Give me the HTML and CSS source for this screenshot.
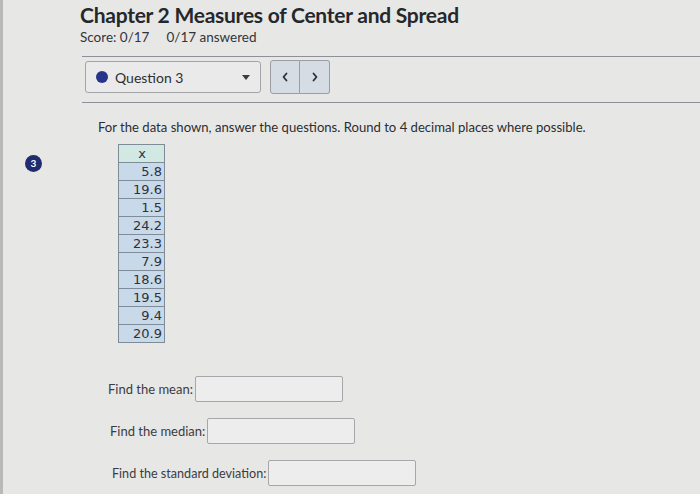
FILE: index.html
```html
<!DOCTYPE html>
<html>
<head>
<meta charset="utf-8">
<link rel="stylesheet" href="styles.css">
</head>
<body>
<div class="page">
  <header class="head">
    <h1 class="title">Chapter 2 Measures of Center and Spread</h1>
    <div class="score"><span>Score: 0/17</span><span class="answered">0/17 answered</span></div>
  </header>
  <div class="navbar">
    <div class="qselect">
      <span class="dot"></span>
      <span class="qlabel">Question 3</span>
      <span class="caret"></span>
    </div>
    <div class="arrows">
      <button class="arrow"><svg width="8" height="10" viewBox="0 0 8 10"><path d="M5.5 1.5 L2.5 5 L5.5 8.5" fill="none" stroke="#2e2f35" stroke-width="1.8" stroke-linecap="round" stroke-linejoin="round"/></svg></button>
      <button class="arrow"><svg width="8" height="10" viewBox="0 0 8 10"><path d="M2.5 1.5 L5.5 5 L2.5 8.5" fill="none" stroke="#2e2f35" stroke-width="1.8" stroke-linecap="round" stroke-linejoin="round"/></svg></button>
    </div>
  </div>
  <div class="question">
    <div class="badge">3</div>
    <div class="qbody">
      <p class="prompt">For the data shown, answer the questions. Round to 4 decimal places where possible.</p>
      <table class="data">
        <thead><tr><th>x</th></tr></thead>
        <tbody>
          <tr><td>5.8</td></tr>
          <tr><td>19.6</td></tr>
          <tr><td>1.5</td></tr>
          <tr><td>24.2</td></tr>
          <tr><td>23.3</td></tr>
          <tr><td>7.9</td></tr>
          <tr><td>18.6</td></tr>
          <tr><td>19.5</td></tr>
          <tr><td>9.4</td></tr>
          <tr><td>20.9</td></tr>
        </tbody>
      </table>
      <div class="answers">
        <label class="ans a1">Find the mean: <span class="box"></span></label>
        <label class="ans a2">Find the median: <span class="box"></span></label>
        <label class="ans a3">Find the standard deviation: <span class="box"></span></label>
      </div>
    </div>
  </div>
</div>
</body>
</html>
```
FILE: styles.css
```css
html, body {
  margin: 0;
  padding: 0;
}
body {
  width: 700px;
  height: 494px;
  overflow: hidden;
  background: #e7e8e6;
  font-family: Lato, "Open Sans", sans-serif;
  color: #2e2f33;
  border-left: 3px solid #b9bab8;
  box-sizing: border-box;
}
.page {
  padding-top: 1px;
}
.head {
  padding-left: 77px;
}
.title {
  margin: 0;
  font-size: 21px;
  font-weight: 700;
  line-height: 28px;
  color: #26272b;
  letter-spacing: -0.25px;
}
.score {
  font-size: 13.5px;
  line-height: 16px;
  color: #33343a;
}
.answered {
  margin-left: 17px;
}
.navbar {
  margin-top: 11px;
  margin-left: 79px;
  border-top: 1px solid #8e8f98;
  border-bottom: 1px solid #8e8f98;
  padding: 3px 0 8px 3px;
  display: flex;
  align-items: center;
  gap: 9px;
}
.qselect {
  width: 176px;
  height: 32px;
  box-sizing: border-box;
  border: 1px solid #a3a4a8;
  border-radius: 3px;
  background: #e9eae9;
  display: flex;
  align-items: center;
  padding-left: 10px;
  padding-right: 10px;
}
.dot {
  width: 12px;
  height: 12px;
  border-radius: 50%;
  background: #27348b;
  margin-right: 7px;
}
.qlabel {
  font-size: 14px;
  flex: 1;
}
.caret {
  width: 0;
  height: 0;
  border-left: 4px solid transparent;
  border-right: 4px solid transparent;
  border-top: 5px solid #3a3b40;
}
.arrows {
  display: flex;
}
.arrow {
  width: 30px;
  height: 34px;
  border: 1px solid #9c9da3;
  background: #d5dce4;
  padding: 0;
  margin: 0;
  display: flex;
  align-items: center;
  justify-content: center;
}
.arrow:first-child {
  border-radius: 3px 0 0 3px;
}
.arrow:last-child {
  border-left: none;
  border-radius: 0 3px 3px 0;
}
.question {
  display: flex;
  padding-left: 22px;
  padding-top: 14px;
}
.badge {
  width: 17px;
  height: 17px;
  border-radius: 50%;
  background: #1f2c70;
  color: #fff;
  font-size: 10px;
  font-weight: 700;
  text-align: center;
  line-height: 17px;
  margin-top: 38px;
  flex: none;
}
.qbody {
  margin-left: 56px;
}
.prompt {
  margin: 0;
  font-size: 13.1px;
  line-height: 20px;
  color: #2c2d31;
}
.data {
  margin-top: 7px;
  margin-left: 20px;
  border-collapse: collapse;
  font-size: 13px;
  font-family: "DejaVu Sans", sans-serif;
}
.data th, .data td {
  border: 1px solid #7f8b96;
  width: 40px;
  height: 17px;
  padding: 0 2px 0 3px;
  line-height: 17px;
  color: #2f3238;
}
.data th {
  background: #d2e9e3;
  font-weight: 400;
  text-align: center;
}
.data td {
  background: #c8d9ea;
  text-align: right;
}
.answers {
  margin-top: 33px;
  display: flex;
  flex-direction: column;
  gap: 16px;
}
.ans {
  display: flex;
  align-items: center;
  font-size: 13px;
  color: #3b3c42;
}
.a1 { margin-left: 10px; }
.a2 { margin-left: 12px; }
.a3 { margin-left: 14px; font-size: 12.6px; }
.box {
  display: inline-block;
  width: 146px;
  height: 24px;
  margin-left: 2px;
  border: 1px solid #a6a7ab;
  border-radius: 2px;
  background: #ecedec;
}
```
